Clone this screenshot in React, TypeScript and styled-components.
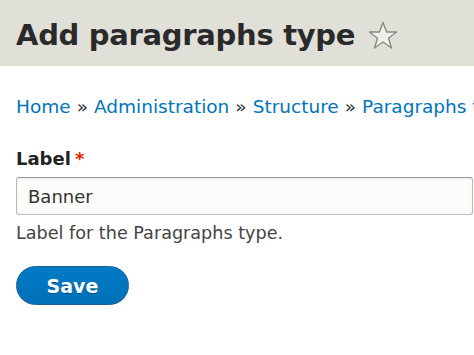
import styled, { createGlobalStyle } from "styled-components";

const GlobalStyle = createGlobalStyle`
  html, body {
    margin: 0;
    padding: 0;
    background: #ffffff;
    overflow: hidden;
  }
  body {
    font-family: "DejaVu Sans", "Liberation Sans", sans-serif;
    color: #333;
  }
`;

const Page = styled.div`
  width: 474px;
  height: 355px;
  overflow: hidden;
`;

const Header = styled.header`
  display: flex;
  align-items: center;
  gap: 13px;
  height: 66px;
  padding: 4px 16px 0;
  background: #e0e0d8;
  box-sizing: border-box;
`;

const Title = styled.h1`
  margin: 0;
  font-size: 29px;
  font-weight: bold;
  color: #2a2a2a;
  white-space: nowrap;
  letter-spacing: -0.3px;
`;

const Content = styled.main`
  display: flex;
  flex-direction: column;
  padding: 30px 0 0 16px;
`;

const Breadcrumb = styled.nav`
  display: flex;
  gap: 6px;
  white-space: nowrap;
  font-size: 18.5px;
  color: #333;
`;

const Crumb = styled.a`
  color: #0074bd;
  text-decoration: none;
`;

const Form = styled.form`
  display: flex;
  flex-direction: column;
  margin-top: 31px;
`;

const Label = styled.label`
  font-size: 18px;
  font-weight: bold;
  color: #222;
  margin-bottom: 8px;
`;

const Required = styled.span`
  color: #e62600;
  margin-left: 4px;
`;

const Input = styled.input`
  width: 457px;
  height: 38px;
  box-sizing: border-box;
  border: 1px solid #b8b8b8;
  border-top-color: #999;
  border-radius: 3px;
  background: #fcfcfa;
  padding: 0 11px;
  font-family: inherit;
  font-size: 18px;
  color: #333;
  box-shadow: inset 0 1px 2px rgba(0, 0, 0, 0.08);
`;

const Help = styled.div`
  font-size: 17.6px;
  color: #444;
  margin-top: 8px;
`;

const SaveButton = styled.button`
  align-self: flex-start;
  margin-top: 23px;
  width: 113px;
  height: 39px;
  border-radius: 20px;
  border: 1px solid #1e5c90;
  background: linear-gradient(#007bc6, #0071b8);
  color: #fff;
  font-family: inherit;
  font-size: 19px;
  font-weight: bold;
  text-shadow: 0 1px 1px rgba(0, 0, 0, 0.3);
`;

const Star = () => (
  <svg width="30" height="29" viewBox="0 0 30 29">
    <polygon
      points="15,1.5 18.6,11 28.5,11 20.5,17.2 23.5,27 15,21 6.5,27 9.5,17.2 1.5,11 11.4,11"
      fill="#f0efe9"
      stroke="#8a8a86"
      strokeWidth="1.4"
      strokeLinejoin="round"
    />
  </svg>
);

export default function App() {
  return (
    <Page>
      <GlobalStyle />
      <Header>
        <Title>Add paragraphs type</Title>
        <Star />
      </Header>
      <Content>
        <Breadcrumb>
          <Crumb href="#">Home</Crumb>»
          <Crumb href="#">Administration</Crumb>»
          <Crumb href="#">Structure</Crumb>»
          <Crumb href="#">Paragraphs types</Crumb>
        </Breadcrumb>
        <Form>
          <Label htmlFor="label">
            Label<Required>*</Required>
          </Label>
          <Input id="label" defaultValue="Banner" />
          <Help>Label for the Paragraphs type.</Help>
          <SaveButton type="button">Save</SaveButton>
        </Form>
      </Content>
    </Page>
  );
}
